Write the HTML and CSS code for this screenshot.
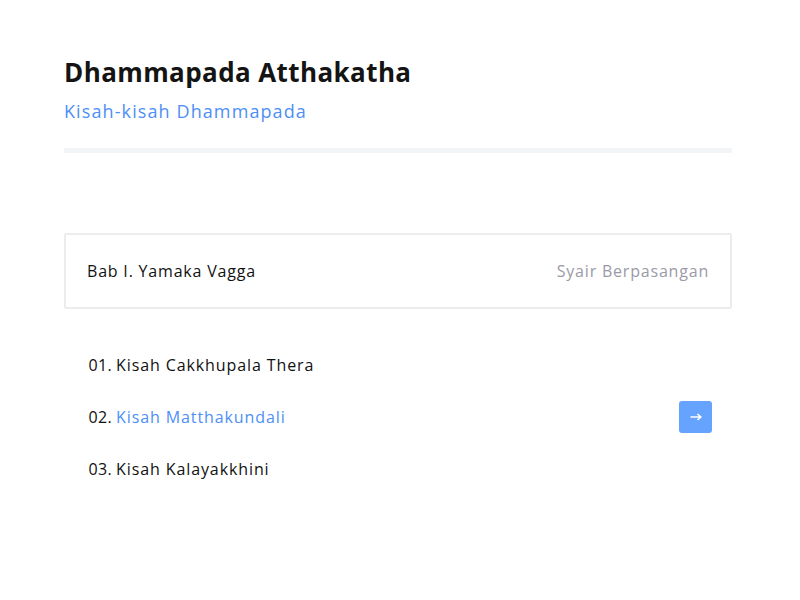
FILE: index.html
```html
<!DOCTYPE html>
<html>
<head>
  <title>Dhammapada Atthakatha</title>
  <link rel="stylesheet" href="styles.css">
</head>
<body>
  <div class="page">
    <div class="header">
      <h1 class="title">Dhammapada Atthakatha</h1>
      <h2 class="subtitle">Kisah-kisah Dhammapada</h2>
    </div>

    <div class="chapter">
      <span class="chapter-name">Bab I. Yamaka Vagga</span>
      <span class="chapter-meaning">Syair Berpasangan</span>
    </div>

    <ul class="story-list">
      <li class="story">
        <span class="story-num">01.</span>
        <span class="story-name">Kisah Cakkhupala Thera</span>
      </li>
      <li class="story active">
        <span class="story-num">02.</span>
        <span class="story-name">Kisah Matthakundali</span>
        <button class="go-button">
          <svg width="12" height="8" viewBox="0 0 12 8">
            <path d="M0.5 4H10.5M7.5 1L10.8 4L7.5 7" fill="none" stroke="#fff" stroke-width="1.6"/>
          </svg>
        </button>
      </li>
      <li class="story">
        <span class="story-num">03.</span>
        <span class="story-name">Kisah Kalayakkhini</span>
      </li>
    </ul>
  </div>
</body>
</html>
```

FILE: styles.css
```css
body {
  font-family: "Open Sans", sans-serif;
  margin: 0;
  background-color: #fff;
  color: #1a1a1a;
}

.page {
  width: 668px;
  padding: 56px 64px 0 64px;
}

.header {
  border-bottom: 5px solid #f3f4f6;
  padding-bottom: 26px;
  margin-bottom: 80px;
}

.title {
  font-size: 26px;
  font-weight: 700;
  letter-spacing: 0.4px;
  margin: 0;
  line-height: 32px;
  color: #141414;
}

.subtitle {
  font-size: 18px;
  font-weight: 500;
  letter-spacing: 1.1px;
  margin: 12px 0 0 0;
  line-height: 22px;
  color: #4d8ff7;
}

.chapter {
  display: flex;
  justify-content: space-between;
  align-items: center;
  border: 2px solid #ececec;
  border-radius: 2px;
  padding: 0 21px;
  height: 72px;
  font-size: 16px;
  letter-spacing: 0.8px;
  color: #111;
}

.chapter-meaning {
  color: #9a9aa6;
}

.story-list {
  list-style: none;
  margin: 30px 0 0 0;
  padding: 0 20px 0 23px;
}

.story {
  display: flex;
  align-items: center;
  height: 52px;
  font-size: 16px;
  letter-spacing: 0.9px;
  color: #111;
}

.story-num {
  width: 25px;
  text-align: right;
  margin-right: 4px;
  letter-spacing: 0.3px;
}

.active .story-name {
  color: #4d8ff7;
  font-weight: 500;
}

.go-button {
  display: flex;
  align-items: center;
  justify-content: center;
  margin-left: auto;
  width: 33px;
  height: 32px;
  border: none;
  border-radius: 3px;
  background-color: #66a3ff;
  padding: 0;
  cursor: pointer;
}
```
